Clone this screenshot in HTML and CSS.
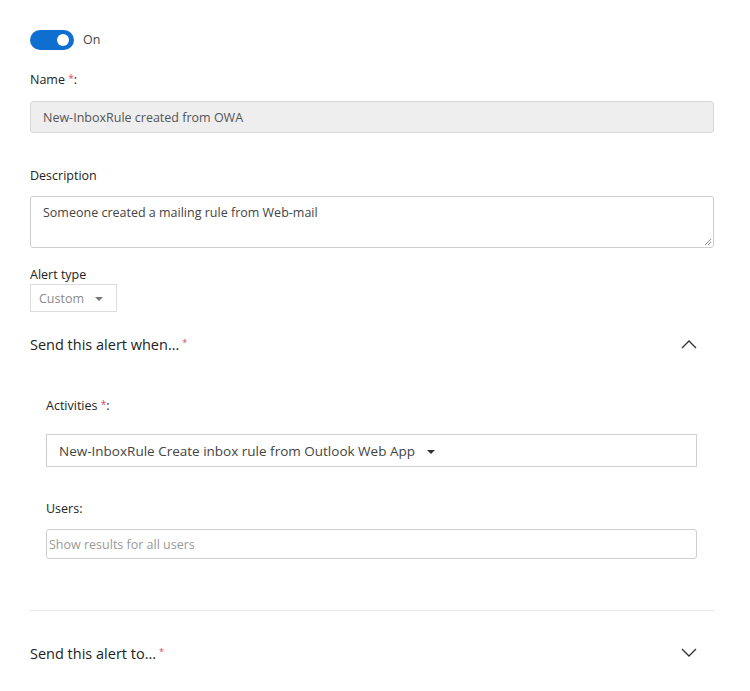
FILE: index.html
```html
<!DOCTYPE html>
<html lang="en">
<head>
    <meta charset="UTF-8">
    <meta name="viewport" content="width=device-width, initial-scale=1.0">
    <title>Alert policy</title>
    <link rel="stylesheet" href="styles.css">
</head>
<body>
    <div class="panel">
        <div class="toggle-row">
            <span class="toggle"><span class="knob"></span></span>
            <span class="toggle-text">On</span>
        </div>

        <label class="field-label name-label">Name <span class="req">*</span>:</label>
        <div class="text-input readonly">New-InboxRule created from OWA</div>

        <label class="field-label desc-label">Description</label>
        <div class="textarea">
            Someone created a mailing rule from Web-mail
            <svg class="grip" width="9" height="9" viewBox="0 0 9 9">
                <path d="M8 2 L2 8 M8 5 L5 8" stroke="#888" stroke-width="1"/>
            </svg>
        </div>

        <label class="field-label type-label">Alert type</label>
        <div class="small-dropdown">Custom <span class="caret"></span></div>

        <div class="section-head open">
            <span>Send this alert when...<span class="req small">*</span></span>
            <svg width="16" height="10" viewBox="0 0 16 10">
                <path d="M1 9 L8 2 L15 9" fill="none" stroke="#333" stroke-width="1.4"/>
            </svg>
        </div>

        <div class="section-body">
            <label class="field-label act-label">Activities <span class="req">*</span>:</label>
            <div class="dropdown">New-InboxRule Create inbox rule from Outlook Web App <span class="caret dark"></span></div>

            <label class="field-label users-label">Users:</label>
            <div class="text-input users">Show results for all users</div>
        </div>

        <hr class="divider">

        <div class="section-head closed">
            <span>Send this alert to...<span class="req small">*</span></span>
            <svg width="16" height="10" viewBox="0 0 16 10">
                <path d="M1 1 L8 8 L15 1" fill="none" stroke="#333" stroke-width="1.4"/>
            </svg>
        </div>
    </div>
</body>
</html>
```

FILE: styles.css
```css
body {
    margin: 0;
    background: #fff;
    font-family: "Open Sans", "Noto Sans", sans-serif;
    color: #333;
}

.panel {
    width: 684px;
    padding: 29px 0 0 30px;
}

.toggle-row {
    display: flex;
    align-items: center;
    height: 21px;
}

.toggle {
    width: 44px;
    height: 20px;
    border-radius: 10px;
    background: #0f6fd1;
    position: relative;
    display: inline-block;
}

.knob {
    position: absolute;
    right: 5px;
    top: 4px;
    width: 12px;
    height: 12px;
    border-radius: 50%;
    background: #fff;
}

.toggle-text {
    margin-left: 9px;
    font-size: 12.5px;
    color: #444;
}

.field-label {
    display: block;
    font-size: 12.5px;
    color: #222;
    line-height: 18px;
}

.req {
    color: #d0485e;
    font-size: 10px;
    vertical-align: 2px;
}

.req.small {
    font-size: 9px;
    vertical-align: 4px;
    margin-left: 3px;
}

.name-label { margin-top: 19px; }
.desc-label { margin-top: 34px; }
.type-label { margin-top: 18px; }
.act-label { margin-top: 0; }
.users-label { margin-top: 33px; }

.text-input {
    box-sizing: border-box;
    height: 32px;
    border: 1px solid #cfcfcf;
    border-radius: 3px;
    padding: 0 12px;
    font-size: 12.5px;
    color: #555;
    display: flex;
    align-items: center;
}

.text-input.readonly {
    margin-top: 12px;
    background: #eeeeee;
    border-color: #d8d8d8;
}

.textarea {
    box-sizing: border-box;
    margin-top: 11px;
    height: 52px;
    border: 1px solid #cfcfcf;
    border-radius: 3px;
    padding: 7px 12px;
    font-size: 12.5px;
    color: #444;
    position: relative;
}

.grip {
    position: absolute;
    right: 1px;
    bottom: 1px;
}

.small-dropdown {
    box-sizing: border-box;
    width: 87px;
    height: 28px;
    border: 1px solid #dcdcdc;
    padding: 0 0 0 8px;
    font-size: 12.5px;
    color: #8a8a8a;
    display: flex;
    align-items: center;
}

.caret {
    display: inline-block;
    width: 0;
    height: 0;
    border-left: 4px solid transparent;
    border-right: 4px solid transparent;
    border-top: 4px solid #777;
    margin-left: 11px;
    margin-top: 2px;
}

.caret.dark {
    border-top-color: #333;
    margin-left: 12px;
}

.section-head {
    display: flex;
    justify-content: space-between;
    align-items: center;
    padding-right: 17px;
    font-size: 14.5px;
    color: #222;
    height: 24px;
}

.section-head.open { margin-top: 20px; }
.section-head.closed { margin-top: 30px; }

.section-body {
    padding: 39px 17px 0 16px;
}

.dropdown {
    box-sizing: border-box;
    margin-top: 19px;
    height: 33px;
    border: 1px solid #cfcfcf;
    padding: 0 12px;
    font-size: 13.5px;
    color: #444;
    display: flex;
    align-items: center;
}

.text-input.users {
    margin-top: 11px;
    height: 30px;
    padding: 0 2px;
    color: #9a9a9a;
}

.divider {
    border: none;
    border-top: 1px solid #e6e6e6;
    margin: 51px 0 0 0;
}
```
